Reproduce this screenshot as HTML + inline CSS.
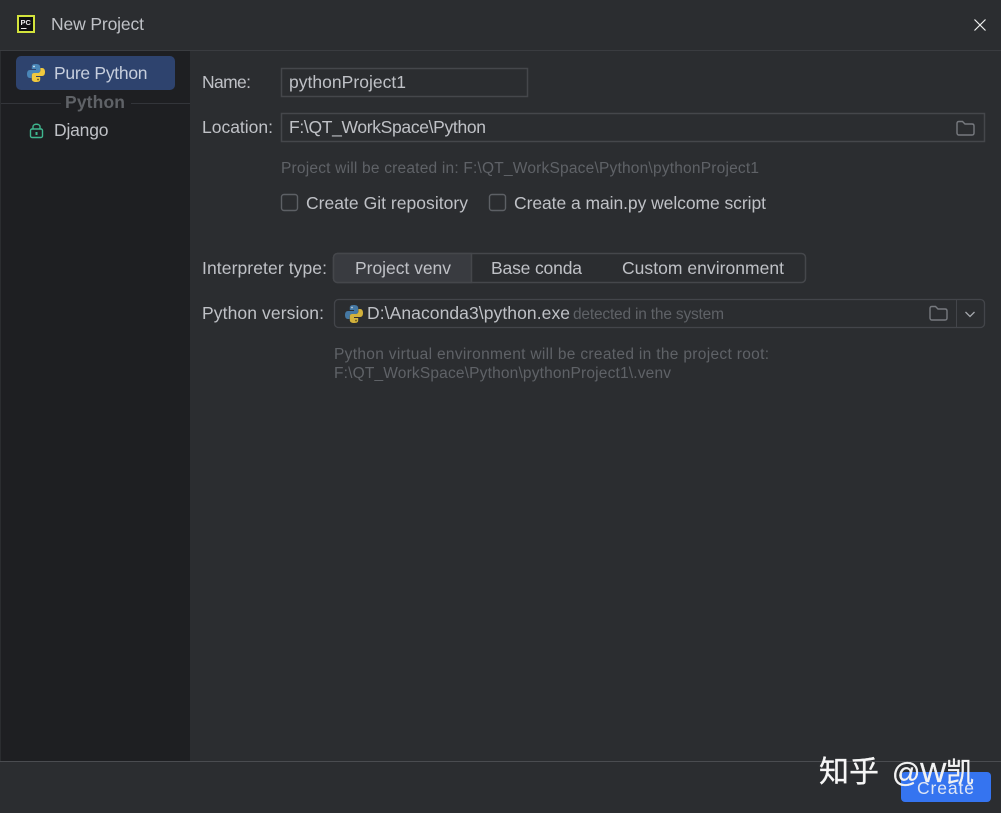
<!DOCTYPE html>
<html>
<head>
<meta charset="utf-8">
<title>New Project</title>
<style>
html,body{margin:0;padding:0;background:#2b2d30;width:1001px;height:813px;overflow:hidden}
svg{display:block;position:absolute;left:0;top:0}
text{font-family:"Liberation Sans","Noto Sans CJK SC",sans-serif;font-size:17.500px;fill:#bfc1c6}
.d{fill:#5f6267;font-size:15.500px}
</style>
</head>
<body>
<svg width="1001" height="813" viewBox="0 0 1001 813" xmlns="http://www.w3.org/2000/svg">
<defs>
<g id="py">
<path d="M9.800 1C5.800 1 5.800 2.700 5.800 4V6H10V7H4C2 7 1 8.500 1 11C1 13.500 2 15 4 15H5.600V12.800C5.600 11 7 10 8.500 10H12C13.300 10 14.200 9 14.200 7.800V4C14.200 2 12.500 1 9.800 1Z" fill="#4a86b8"/>
<path d="M10.200 19C14.200 19 14.200 17.300 14.200 16V14H10V13H16C18 13 19 11.500 19 9C19 6.500 18 5 16 5H14.400V7.200C14.400 9 13 10 11.500 10H8C6.700 10 5.800 11 5.800 12.200V16C5.800 18 7.500 19 10.200 19Z" fill="#f0c93e"/>
<circle cx="8" cy="3.500" r="0.900" fill="#dfeaf2"/><circle cx="12" cy="16.500" r="0.900" fill="#6b5a16"/>
</g>
<g id="folder" fill="none" stroke="#777a7f" stroke-width="1.400">
<path d="M1 3.500C1 2 1.800 1.500 3 1.500H6.500L9 4H16C17.200 4 18 4.800 18 6V13C18 14.200 17.200 15 16 15H3C1.800 15 1 14.200 1 13Z"/>
</g>
</defs>

<rect width="1001" height="813" fill="#2b2d30"/>
<rect x="1" y="51" width="189" height="710" fill="#1e1f22"/>
<rect x="0" y="50" width="1001" height="1" fill="#3a3c40"/>
<rect x="0" y="761" width="1001" height="1" fill="#4a4c50"/>

<!-- title bar -->
<rect x="17" y="15" width="18" height="18" fill="#d3e33c"/>
<rect x="19" y="17" width="14" height="14" fill="#0f1012"/>
<text x="20.500" y="25" style="font-size:7.500px;font-weight:bold;fill:#e8e8e8">PC</text>
<rect x="21" y="28" width="5.500" height="1" fill="#e8e8e8"/>
<text x="51" y="30" textLength="93" lengthAdjust="spacing">New Project</text>
<path d="M974.500 19.500L985.500 30.500M985.500 19.500L974.500 30.500" stroke="#f0f0f0" stroke-width="1.200" fill="none"/>

<!-- sidebar -->
<rect x="16" y="56" width="159" height="34" rx="5" fill="#2e436e"/>
<use href="#py" x="26" y="63"/>
<text x="54" y="79" textLength="93.500" lengthAdjust="spacing" style="fill:#c6cedd">Pure Python</text>
<rect x="1" y="103" width="60" height="1" fill="#33353a"/>
<rect x="131" y="103" width="59" height="1" fill="#33353a"/>
<text x="65" y="108" textLength="60" lengthAdjust="spacing" style="font-weight:bold;fill:#5f6267">Python</text>
<g fill="none" stroke="#3fb78f" stroke-width="1.400">
<rect x="30.500" y="129" width="12" height="8.500" rx="1.500"/>
<path d="M33 129V126.500C33 123.500 40 123.500 40 126.500V129"/>
</g>
<rect x="35.500" y="132" width="2" height="3" fill="#3fb78f"/>
<text x="54" y="136" textLength="54.500" lengthAdjust="spacing">Django</text>

<!-- form -->
<text x="202" y="88" textLength="49" lengthAdjust="spacing">Name:</text>
<rect x="281.500" y="68.500" width="246" height="28" fill="#2b2d30" stroke="#45474b" stroke-width="1.500"/>
<text x="289" y="88" textLength="117" lengthAdjust="spacing">pythonProject1</text>

<text x="202" y="133" textLength="71" lengthAdjust="spacing">Location:</text>
<rect x="281.500" y="113.500" width="703" height="28" fill="#2b2d30" stroke="#45474b" stroke-width="1.500"/>
<text x="289" y="133" textLength="197" lengthAdjust="spacing">F:\QT_WorkSpace\Python</text>
<use href="#folder" x="956" y="120"/>

<text class="d" x="281" y="173" textLength="478" lengthAdjust="spacing">Project will be created in: F:\QT_WorkSpace\Python\pythonProject1</text>

<rect x="281.500" y="194.500" width="16" height="16" rx="2.500" fill="#2b2d30" stroke="#5d6065" stroke-width="1.400"/>
<text x="306" y="209" textLength="162" lengthAdjust="spacing">Create Git repository</text>
<rect x="489.500" y="194.500" width="16" height="16" rx="2.500" fill="#2b2d30" stroke="#5d6065" stroke-width="1.400"/>
<text x="514" y="209" textLength="252" lengthAdjust="spacing">Create a main.py welcome script</text>

<text x="202" y="274" textLength="125" lengthAdjust="spacing">Interpreter type:</text>
<rect x="333.500" y="253.500" width="472" height="29" rx="4" fill="#2b2d30" stroke="#45474b" stroke-width="1.500"/>
<path d="M337.500 253.500H471.500V282.500H337.500A4 4 0 0 1 333.500 278.500V257.500A4 4 0 0 1 337.500 253.500Z" fill="#393b40" stroke="#45474b" stroke-width="1.500"/>
<text x="355" y="274" textLength="96" lengthAdjust="spacing">Project venv</text>
<text x="491" y="274" textLength="91" lengthAdjust="spacing">Base conda</text>
<text x="622" y="274" textLength="162" lengthAdjust="spacing">Custom environment</text>

<text x="202" y="319" textLength="122" lengthAdjust="spacing">Python version:</text>
<rect x="334.500" y="299.500" width="650" height="28" rx="4" fill="#2b2d30" stroke="#43454a" stroke-width="1.300"/>
<rect x="956" y="300" width="1" height="27" fill="#43454a"/>
<g opacity="0.850"><use href="#py" x="344" y="304"/></g>
<text x="367" y="319" textLength="203" lengthAdjust="spacing">D:\Anaconda3\python.exe</text>
<text class="d" x="573" y="319" textLength="151" lengthAdjust="spacing">detected in the system</text>
<use href="#folder" x="929" y="305"/>
<path d="M965.500 312L970 316.500L974.500 312" fill="none" stroke="#a5a8ad" stroke-width="1.300"/>

<text class="d" x="334" y="359" textLength="435" lengthAdjust="spacing">Python virtual environment will be created in the project root:</text>
<text class="d" x="334" y="378" textLength="337" lengthAdjust="spacing">F:\QT_WorkSpace\Python\pythonProject1\.venv</text>

<!-- button -->
<rect x="901" y="772" width="90" height="30" rx="4" fill="#3574f0"/>
<text x="917" y="794" textLength="57" lengthAdjust="spacing" style="fill:#dfe6f5">Create</text>

<!-- watermark -->
<text x="819" y="782" style="font-size:30px;fill:#f6f6f6;stroke:#f6f6f6;stroke-width:0.300">知乎</text>
<text x="892" y="782" textLength="82" lengthAdjust="spacing" style="font-size:28px;fill:#f2f2f2;stroke:#f2f2f2;stroke-width:0.300">@W凯</text>
</svg>
</body>
</html>
